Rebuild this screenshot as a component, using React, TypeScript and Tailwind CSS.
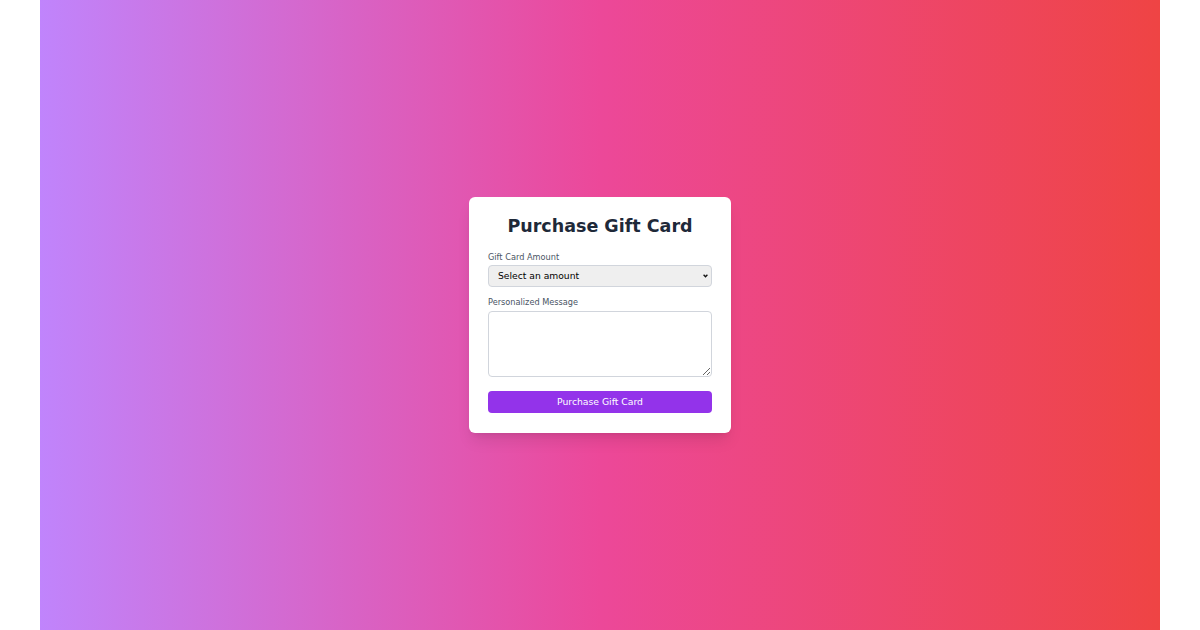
import React, { useState } from 'react';

const amounts = ['$25', '$50', '$100', '$200'];

const App: React.FC = () => {
  const [amount, setAmount] = useState('');
  const [message, setMessage] = useState('');

  return (
    <div className="mx-10 min-h-screen flex items-center justify-center bg-linear-to-r/srgb from-[#c084fc] via-[#ec4899] to-[#ef4444] font-['DejaVu_Sans',sans-serif]">
      <div className="w-[262px] bg-white rounded-md shadow-lg px-[19px] pt-[16px] pb-[20px]">
        <h1 className="text-[17.5px] leading-[26px] font-bold text-gray-800 text-center mb-[12px]">Purchase Gift Card</h1>
        <form onSubmit={e => e.preventDefault()}>
          <label className="block text-[8.2px] leading-[12px] text-gray-600 mb-[2px]">Gift Card Amount</label>
          <div className="relative">
            <select
              value={amount}
              onChange={e => setAmount(e.target.value)}
              className="block w-full h-[22px] appearance-none pl-[9px] pr-4 text-[9.2px] text-black bg-[#efefef] border border-gray-300 rounded"
            >
              <option value="">Select an amount</option>
              {amounts.map(a => (
                <option key={a} value={a}>{a}</option>
              ))}
            </select>
            <svg className="pointer-events-none absolute right-[4px] top-[9px] w-[5px] h-[4px]" viewBox="0 0 5 4" fill="none" stroke="#111" strokeWidth={1.3}>
              <path d="M0.6 0.8 L2.5 2.8 L4.4 0.8" />
            </svg>
          </div>
          <label className="block mt-[9px] text-[8.2px] leading-[12px] text-gray-600 mb-[3px]">Personalized Message</label>
          <textarea
            value={message}
            onChange={e => setMessage(e.target.value)}
            className="block w-full h-[66px] border border-gray-300 rounded text-[9.2px] p-1"
          />
          <button className="block w-full h-[22px] mt-[14px] bg-[#9333ea] text-white text-[9.25px] rounded">
            Purchase Gift Card
          </button>
        </form>
      </div>
    </div>
  );
};

export default App;
